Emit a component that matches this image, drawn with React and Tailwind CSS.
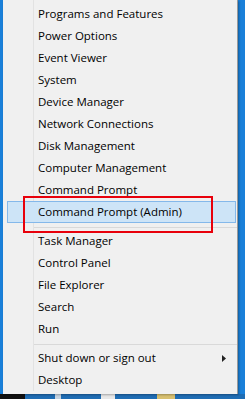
import React from "react";

const groups = [
  ["Programs and Features", "Power Options", "Event Viewer", "System", "Device Manager", "Network Connections", "Disk Management", "Computer Management", "Command Prompt", "Command Prompt (Admin)"],
  ["Task Manager", "Control Panel", "File Explorer", "Search", "Run"],
  ["Shut down or sign out", "Desktop"],
];

function Item({ label, active, arrow }) {
  return (
    <div className={"relative flex h-[22px] items-center mr-[1px] ml-[4px] " + (active ? "bg-[#cde4f7] border border-[#84b8ea]" : "border border-transparent")}>
      <span className="pl-[30px] text-[11.5px] leading-none text-[#000]">{label}</span>
      {arrow && (
        <svg className="absolute right-[9px] top-[7px]" width="4" height="7" viewBox="0 0 4 7">
          <path d="M0 0 L4 3.5 L0 7 Z" fill="#222" />
        </svg>
      )}
    </div>
  );
}

function Sep() {
  return (
    <div className="h-[7px] pt-[4px] pl-[30px]">
      <div className="h-px bg-[#d9d9d9]" />
    </div>
  );
}

export default function App() {
  return (
    <div className="relative w-[245px] h-[399px] overflow-hidden bg-[#1a80d9] flex flex-col" style={{ fontFamily: '"Open Sans", "Noto Sans", sans-serif' }}>
      <div className="flex flex-1">
        <div className="w-[3px] bg-[#1a80d9]" />
        <div className="relative w-[235px] h-[394px] bg-[#f0f0f0] border-r border-[#9a9a9a] shadow-[1px_1px_2px_rgba(0,0,0,0.3)] pt-[3px]">
          <div className="absolute left-[30px] top-0 bottom-[3px] w-px bg-[#e2e2e2]" />
          {groups.map((g, gi) => (
            <React.Fragment key={gi}>
              {gi > 0 && <Sep />}
              {g.map((label) => (
                <Item key={label} label={label} active={label === "Command Prompt (Admin)"} arrow={label === "Shut down or sign out"} />
              ))}
            </React.Fragment>
          ))}
        </div>
      </div>
      <div className="flex h-[5px] bg-[#1f6db4]">
        <div className="w-[25px] bg-[#111]" />
        <div className="ml-[30px] w-[6px] bg-[#c8d4e0]" />
        <div className="ml-[40px] w-[14px] bg-[#e8e8e8]" />
        <div className="ml-[42px] w-[18px] bg-[#d8c070]" />
      </div>
      <div className="absolute left-[23px] top-[196px] w-[190px] h-[37px] border-2 border-[#e8000b]" />
    </div>
  );
}
